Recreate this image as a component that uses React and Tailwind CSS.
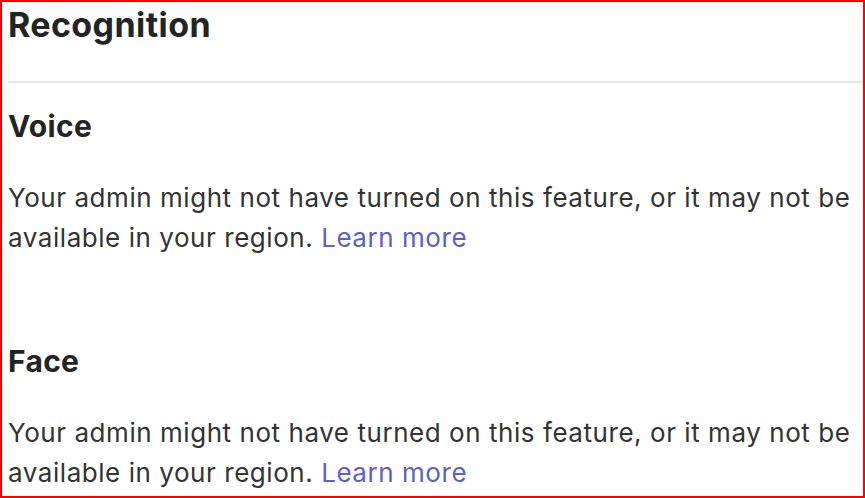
export default function App() {
  const sections = [
    { title: 'Voice' },
    { title: 'Face' },
  ];

  return (
    <div className="w-[865px] h-[498px] border-2 border-[#ff0000] bg-white overflow-hidden font-['Inter',sans-serif] text-[#242424]">
      <div className="pl-[6px] pt-[3px]">
        <h1 className="text-[34px] leading-[40px] font-bold tracking-[0.4px]">Recognition</h1>
        <div className="mt-[36px] h-[2px] bg-[#e6e6e6]" />

        {sections.map((s, i) => (
          <div key={s.title} className={i === 0 ? 'mt-[25px]' : 'mt-[85px]'}>
            <h2 className="text-[30px] leading-[36px] font-bold tracking-[0.3px]">{s.title}</h2>
            <p className="mt-[34px] text-[26px] leading-[40px] tracking-[0.55px] text-[#333333]">
              Your admin might not have turned on this feature, or it may not be available in your region.{' '}
              <a href="#" className="text-[#5b5fc7]">Learn more</a>
            </p>
          </div>
        ))}
      </div>
    </div>
  );
}
